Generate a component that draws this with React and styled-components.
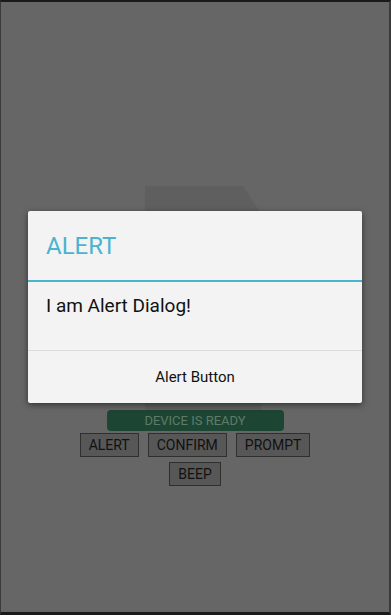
import React from 'react'
import styled, { createGlobalStyle } from 'styled-components'

const GlobalStyle = createGlobalStyle`
  html, body {
    margin: 0;
    padding: 0;
    background: #1c1c1c;
  }
  body {
    font-family: Roboto, "Liberation Sans", sans-serif;
  }
`

const App = () => {
  return (
    <Frame>
      <GlobalStyle />
      <Screen>
        <Logo viewBox="0 0 130 224" width="130" height="224">
          <polygon points="0,0 98,0 116,28 116,224 0,224" fill="#5f5f5f" />
        </Logo>
        <Ready>Device is ready</Ready>
        <ButtonRow>
          <AppButton>Alert</AppButton>
          <AppButton>Confirm</AppButton>
          <AppButton>Prompt</AppButton>
        </ButtonRow>
        <ButtonRow>
          <AppButton>Beep</AppButton>
        </ButtonRow>
        <Dialog>
          <Title>ALERT</Title>
          <Message>I am Alert Dialog!</Message>
          <DialogButton>Alert Button</DialogButton>
        </Dialog>
      </Screen>
    </Frame>
  )
}

//Styled Component
const Frame = styled.div`
  box-sizing: border-box;
  width: 391px;
  height: 615px;
  border-top: 2px solid #1a1a1a;
  border-bottom: 3px solid #1a1a1a;
  border-left: 1px solid #3a3a3a;
  border-right: 2px solid #3a3a3a;
  overflow: hidden;
`

const Screen = styled.div`
  position: relative;
  height: 100%;
  background: #666666;
  display: flex;
  flex-direction: column;
  align-items: center;
`

const Logo = styled.svg`
  display: block;
  margin-top: 184px;
  margin-left: 30px;
`

const Ready = styled.div`
  width: 177px;
  height: 21px;
  border-radius: 4px;
  background: #1d4533;
  color: #5e7c6a;
  font-size: 13px;
  line-height: 21px;
  text-align: center;
  text-transform: uppercase;
`

const ButtonRow = styled.div`
  display: flex;
  gap: 9px;
  margin-top: 2px;
  & + & {
    margin-top: 5px;
  }
`

const AppButton = styled.div`
  box-sizing: border-box;
  height: 24px;
  padding: 0 8px;
  border: 1px solid #2f2f2f;
  background: #575757;
  color: #111111;
  font-size: 14px;
  line-height: 22px;
  text-transform: uppercase;
`

const Dialog = styled.div`
  position: absolute;
  top: 209px;
  left: 27px;
  width: 334px;
  background: #f3f3f3;
  border-radius: 2px;
  box-shadow: 0 2px 6px rgba(0, 0, 0, 0.5);
  display: flex;
  flex-direction: column;
`

const Title = styled.div`
  height: 69px;
  padding-left: 18px;
  border-bottom: 2px solid #4ab3cf;
  color: #4ab3cf;
  font-size: 24px;
  line-height: 70px;
`

const Message = styled.div`
  height: 69px;
  box-sizing: border-box;
  padding: 12px 18px 0;
  border-bottom: 1px solid #dcdcdc;
  color: #111111;
  font-size: 19px;
  line-height: 24px;
`

const DialogButton = styled.div`
  height: 52px;
  line-height: 52px;
  text-align: center;
  color: #111111;
  font-size: 15px;
`

export default App
